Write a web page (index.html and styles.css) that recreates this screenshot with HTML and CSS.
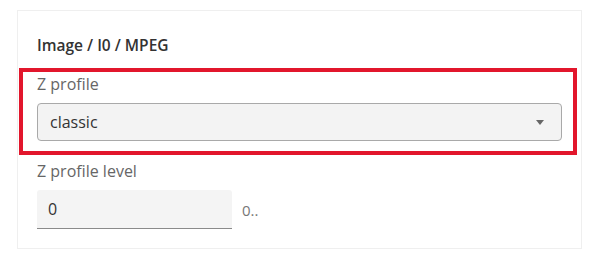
FILE: index.html
```html
<!DOCTYPE html>
<html lang="en">
<head>
    <meta charset="UTF-8">
    <title>Image / I0 / MPEG</title>
    <link rel="stylesheet" href="styles.css">
</head>
<body>
  <div class="card">
    <h2 class="card-title">Image / I0 / MPEG</h2>

    <div class="field highlighted">
      <label class="field-label">Z profile</label>
      <div class="select">
        <span>classic</span>
        <span class="caret"></span>
      </div>
    </div>

    <div class="field">
      <label class="field-label">Z profile level</label>
      <div class="input-row">
        <div class="input">0</div>
        <span class="hint">0..</span>
      </div>
    </div>
  </div>
</body>
</html>
```

FILE: styles.css
```css
* {
    margin: 0;
    padding: 0;
    box-sizing: border-box;
}

body {
    font-family: 'Open Sans', 'Noto Sans', sans-serif;
    background: #ffffff;
    color: #333333;
}

.card {
    margin: 10px 0 0 17px;
    width: 565px;
    height: 239px;
    border: 1px solid #efefef;
    padding: 24px 19px 0;
}

.card-title {
    font-size: 15.5px;
    font-weight: 600;
    line-height: 20px;
    color: #333333;
    margin-bottom: 19px;
}

.field {
    position: relative;
}

.field + .field {
    margin-top: 20px;
}

.field-label {
    display: block;
    font-size: 16px;
    line-height: 20px;
    color: #666666;
    margin-bottom: 9px;
}

/* red highlight drawn over the field */
.highlighted::after {
    content: '';
    position: absolute;
    top: -6px;
    left: -18px;
    right: -15px;
    bottom: -14px;
    border: 4px solid #e2162c;
    pointer-events: none;
}

.select {
    height: 38px;
    display: flex;
    align-items: center;
    justify-content: space-between;
    padding: 0 17px 0 12px;
    background: #f3f3f3;
    border: 1px solid #a9a9a9;
    border-radius: 4px;
    font-size: 16px;
    color: #333333;
}

.caret {
    width: 0;
    height: 0;
    border-left: 4px solid transparent;
    border-right: 4px solid transparent;
    border-top: 5px solid #666666;
}

.input-row {
    display: flex;
    align-items: center;
    gap: 10px;
}

.input {
    width: 195px;
    height: 39px;
    display: flex;
    align-items: center;
    padding: 0 11px;
    background: #f4f4f4;
    border-bottom: 1px solid #8a8a8a;
    border-radius: 3px 3px 0 0;
    font-size: 16px;
    color: #333333;
}

.hint {
    font-size: 15px;
    color: #777777;
}
```
